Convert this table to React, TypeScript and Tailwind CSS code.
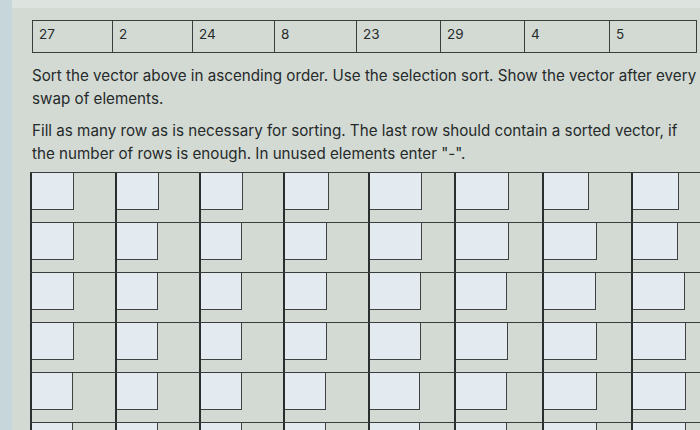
import React from 'react';

const vector = [27, 2, 24, 8, 23, 29, 4, 5];
const headWidths = [80, 80, 82, 82, 84, 84, 85, 87];

const colWidths = [85, 84, 84, 85, 86, 88, 89, 80];
const boxWidths = [
  [42, 42, 42, 44, 52, 53, 45, 46],
  [42, 41, 41, 42, 52, 53, 53, 45],
  [42, 41, 41, 42, 51, 51, 52, 52],
  [42, 41, 41, 42, 51, 52, 53, 53],
  [41, 41, 41, 41, 50, 51, 53, 53],
  [41, 41, 41, 41, 50, 51, 53, 53],
];

const GridRow: React.FC<{ widths: number[] }> = ({ widths }) => (
  <div className="flex h-[50px] shrink-0 border-t-[1.5px] border-[#3a3d3c]">
    {colWidths.map((w, i) => (
      <div
        key={i}
        className="h-full shrink-0 border-l-2 border-[#2b2e2e]"
        style={{ width: w }}
      >
        <div
          className="h-[37px] border-[1.5px] border-l-0 border-t-0 border-[#3f4241] bg-[#e4ebf0]"
          style={{ width: widths[i] }}
        />
      </div>
    ))}
  </div>
);

export default function App() {
  return (
    <div
      className="flex h-[430px] w-[700px] overflow-hidden bg-[#d3dad4] text-[#262a2a]"
      style={{ fontFamily: 'Inter, "Liberation Sans", Arial, sans-serif' }}
    >
      <div className="w-[12px] shrink-0 bg-[#c6d6da]" />
      <div className="flex min-w-0 flex-1 flex-col">
        <div className="h-[8px] shrink-0 bg-[#dde3de]" />
        <div className="flex flex-col pl-[20px] pt-[12px]">
          <div className="flex h-[33px] border-[1.5px] border-l-0 border-[#3a3d3c] w-max">
            {vector.map((v, i) => (
              <div
                key={i}
                className="flex shrink-0 items-center border-l-[1.5px] border-[#3a3d3c] px-[6px] pb-[4px] text-[13.5px]"
                style={{ width: headWidths[i] }}
              >
                {v}
              </div>
            ))}
          </div>

          <p className="mt-[11px] w-[672px] text-[15.2px] leading-[23px]">
            Sort the vector above in ascending order. Use the selection sort. Show the vector after every swap of elements.
          </p>
          <p className="mt-[9px] w-[660px] text-[15.2px] leading-[23px]">
            Fill as many row as is necessary for sorting. The last row should contain a sorted vector, if the number of rows is enough. In unused elements enter "-".
          </p>

          <div className="-ml-[2px] mt-[7px] flex flex-col">
            {boxWidths.map((w, r) => (
              <GridRow key={r} widths={w} />
            ))}
          </div>
        </div>
      </div>
    </div>
  );
}
